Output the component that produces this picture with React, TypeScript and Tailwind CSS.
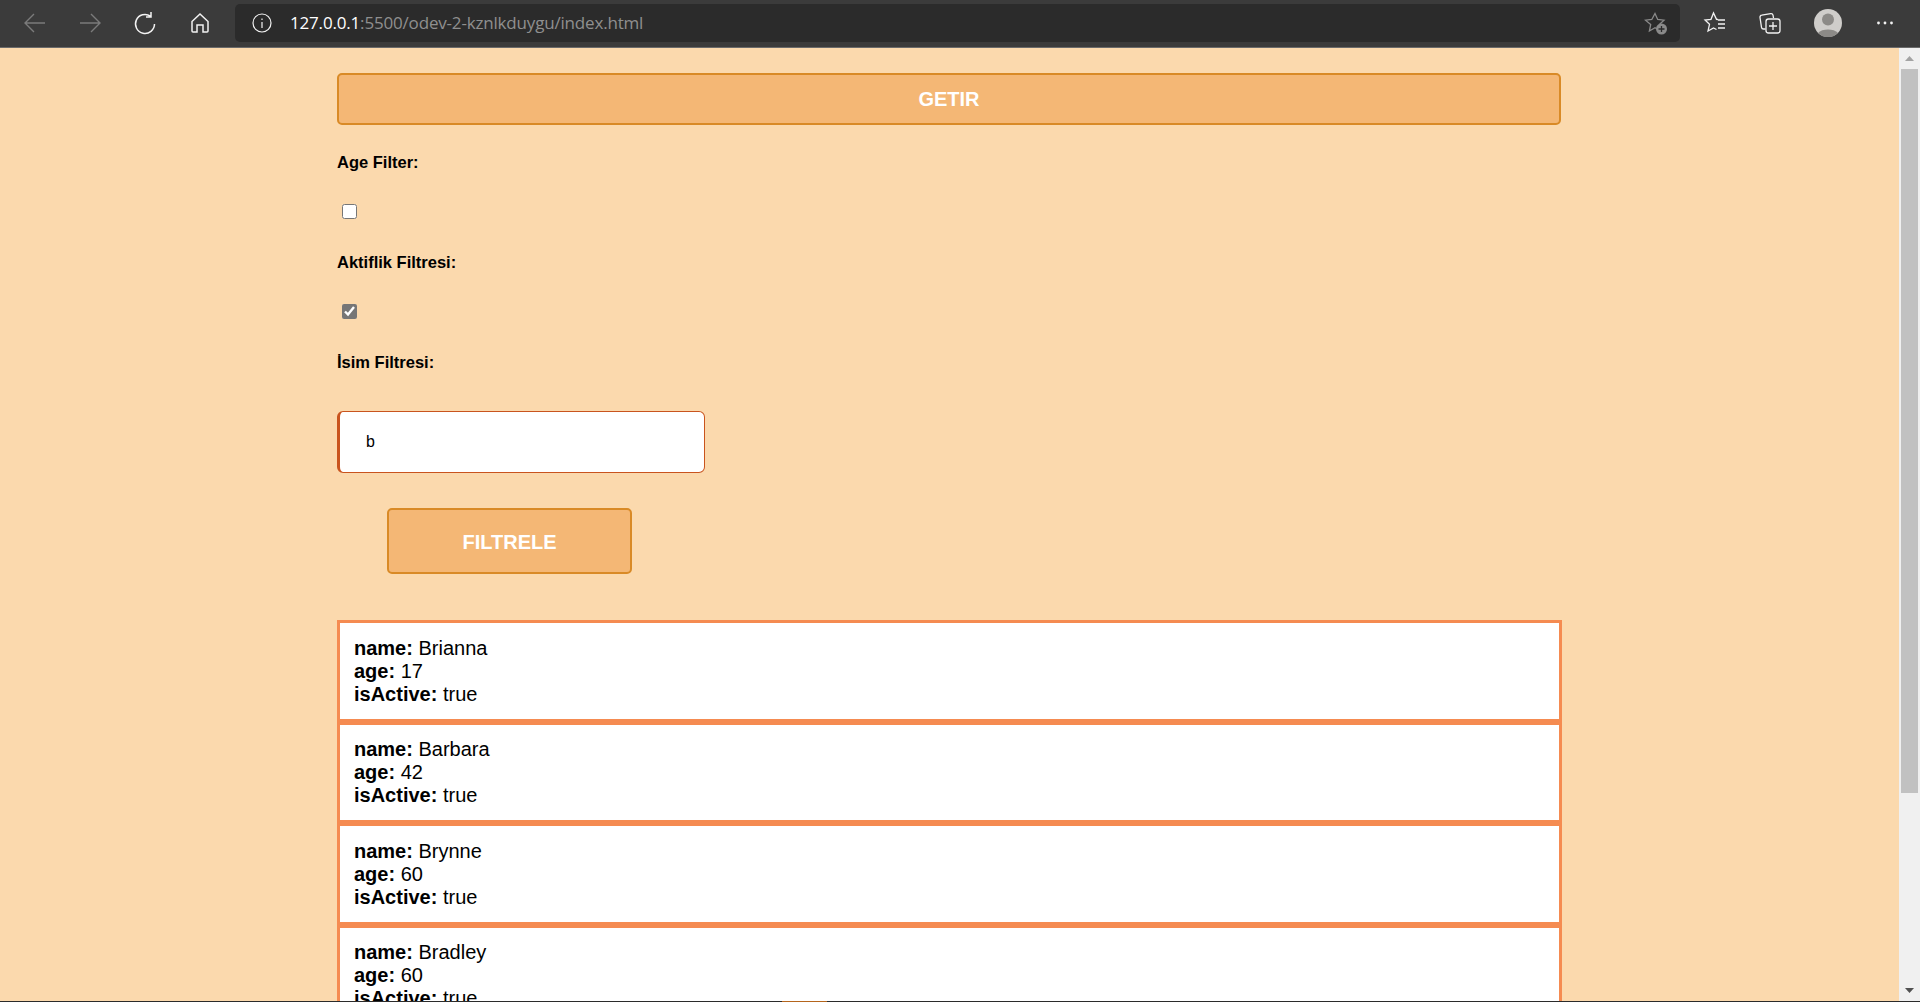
import React from "react";

const people = [
  { name: "Brianna", age: 17 },
  { name: "Barbara", age: 42 },
  { name: "Brynne", age: 60 },
  { name: "Bradley", age: 60 },
];

const labelClass = "block text-[16.5px] font-bold leading-[18px] text-black";

function Toolbar() {
  return (
    <div className="flex h-[48px] shrink-0 items-center border-b border-[#6a6a6a] bg-[#3b3b3b] pb-[1px] font-['Open_Sans',sans-serif]">
      {/* nav buttons */}
      <div className="flex w-[235px] items-center pl-[23px] gap-[31px]">
        <svg className="h-[24px] w-[24px]" viewBox="0 0 24 24" fill="none" stroke="#7b7b7b" strokeWidth={1.4}>
          <path d="M22 12H2.5M11 3l-9 9 9 9" />
        </svg>
        <svg className="h-[24px] w-[24px]" viewBox="0 0 24 24" fill="none" stroke="#7b7b7b" strokeWidth={1.4}>
          <path d="M2 12h19.5M13 3l9 9-9 9" />
        </svg>
        <svg className="h-[24px] w-[24px]" viewBox="0 0 24 24" fill="none" stroke="#f2f2f2" strokeWidth={1.5}>
          <path d="M17.5 5.2A9.5 9.5 0 1 0 21.5 13M18 1v5h-5" />
        </svg>
        <svg className="h-[24px] w-[24px]" viewBox="0 0 24 24" fill="none" stroke="#f2f2f2" strokeWidth={1.5}>
          <path d="M4 10.5 12 3l8 7.500V20a1 1 0 0 1-1 1h-4v-7H9v7H5a1 1 0 0 1-1-1z" />
        </svg>
      </div>
      {/* address bar */}
      <div className="flex h-[38px] w-[1445px] items-center rounded-[5px] bg-[#2b2b2b] pl-[17px] pr-[12px]">
        <svg className="h-[20px] w-[20px] shrink-0" viewBox="0 0 20 20" fill="none" stroke="#f2f2f2" strokeWidth={1.2}>
          <circle cx="10" cy="10" r="9" />
          <path d="M10 9v6M10 5.500v1.500" />
        </svg>
        <div className="ml-[18px] text-[17px] tracking-[-0.18px] whitespace-nowrap text-[#8f8f8f]">
          <span className="text-white">127.0.0.1</span>:5500/odev-2-kznlkduygu/index.html
        </div>
        <div className="flex-1" />
        <svg className="h-[24px] w-[24px]" viewBox="0 0 24 24" fill="none">
          <path d="M11 2.500l2.700 6 6.300.700-4.700 4.300 1.300 6.500-5.600-3.300-5.600 3.300 1.300-6.500L1.500 9.200l6.300-.7z" stroke="#8a8a8a" strokeWidth={1.3} />
          <circle cx="17.500" cy="18" r="5.500" fill="#8a8a8a" />
          <path d="M17.500 15v6M14.500 18h6" stroke="#2b2b2b" strokeWidth={1.3} />
        </svg>
      </div>
      {/* right side */}
      <div className="flex flex-1 items-center pl-[23px]">
        <svg className="h-[24px] w-[24px]" viewBox="0 0 24 24" fill="none" stroke="#f2f2f2" strokeWidth={1.3}>
          <path d="M15 8.500l-1.500-.2L10.500 2 8 8.300 2 9l4.500 4.300L5 20l5.500-3 3 1.500" />
          <path d="M15 9h7M15 13h7M15 17h7" />
        </svg>
        <svg className="ml-[31px] h-[24px] w-[24px]" viewBox="0 0 24 24" fill="none" stroke="#f2f2f2" strokeWidth={1.3}>
          <path d="M7.500 18H5.500a2 2 0 0 1-2-1.700L2 6.500a2 2 0 0 1 1.700-2.300l9-1.500a2 2 0 0 1 2.300 1.500L15.500 7" />
          <rect x="8" y="8" width="14" height="14" rx="2.500" />
          <path d="M15 11v8M11 15h8" />
        </svg>
        <svg className="ml-[32px] h-[28px] w-[28px]" viewBox="0 0 28 28">
          <circle cx="14" cy="14" r="14" fill="#cfcdca" />
          <circle cx="14" cy="10.500" r="6" fill="#8c8a87" />
          <path d="M4 24a12 8 0 0 1 20 0 14 14 0 0 1-20 0z" fill="#8c8a87" />
        </svg>
        <svg className="ml-[35px] h-[16px] w-[16px]" viewBox="0 0 16 16" fill="#f2f2f2">
          <circle cx="1.500" cy="8" r="1.400" />
          <circle cx="8" cy="8" r="1.400" />
          <circle cx="14.500" cy="8" r="1.400" />
        </svg>
      </div>
    </div>
  );
}

function Scrollbar() {
  return (
    <div className="flex w-[21px] shrink-0 flex-col items-center bg-[#f0f0f0]">
      <svg className="mt-[8px] h-[5px] w-[9px]" viewBox="0 0 9 5" fill="#a3a3a3">
        <path d="M4.500 0 9 5H0z" />
      </svg>
      <div className="mt-[8px] h-[724px] w-[17px] bg-[#c1c1c1]" />
      <div className="flex-1" />
      <svg className="mb-[8px] h-[5px] w-[9px]" viewBox="0 0 9 5" fill="#505050">
        <path d="M0 0h9L4.500 5z" />
      </svg>
    </div>
  );
}

export default function App() {
  return (
    <div className="flex h-screen flex-col overflow-hidden bg-[#fbd9ad] font-['Liberation_Sans',Arial,sans-serif]">
      <Toolbar />
      <div className="flex min-h-0 flex-1">
        <div className="min-w-0 flex-1 overflow-hidden">
          <div className="mx-auto w-[1225px] pt-[25px]">
            <button className="block h-[52px] w-[1224px] rounded-[5px] border-2 border-[#d98a26] bg-[#f4b775] text-[20px] font-bold text-white">
              GETIR
            </button>

            <label className={`${labelClass} mt-[28px]`}>Age Filter:</label>
            <div className="mt-[33px] h-[15px] pl-[5px] leading-none">
              <input type="checkbox" className="m-0 block h-[15px] w-[15px]" />
            </div>

            <label className={`${labelClass} mt-[34px]`}>Aktiflik Filtresi:</label>
            <div className="mt-[33px] h-[15px] pl-[5px] leading-none">
              <input type="checkbox" defaultChecked className="m-0 block h-[15px] w-[15px] accent-[#767676]" />
            </div>

            <label className={`${labelClass} mt-[34px]`}>İsim Filtresi:</label>

            <input
              type="text"
              defaultValue="b"
              className="mt-[40px] block h-[62px] w-[368px] rounded-[6px] border border-l-[3px] border-[#c9541e] bg-white pl-[26px] text-base text-black outline-none"
            />

            <button className="mt-[35px] ml-[50px] block h-[66px] w-[245px] rounded-[5px] border-2 border-[#d98a26] bg-[#f4b775] pt-[1px] text-[20px] font-bold text-white">
              FILTRELE
            </button>

            <div className="mt-[46px]">
              {people.map((p) => (
                <div key={p.name} className="border-[3px] border-[#f58b51] bg-white px-[14px] pt-[13.6px] pb-[13px] text-[20px] leading-[23px] text-black">
                  <div>
                    <b>name:</b> {p.name}
                  </div>
                  <div>
                    <b>age:</b> {p.age}
                  </div>
                  <div>
                    <b>isActive:</b> true
                  </div>
                </div>
              ))}
            </div>
          </div>
        </div>
        <Scrollbar />
      </div>
      {/* bottom edge of the window */}
      <div className="flex h-px shrink-0 bg-[#2b2b2b]">
        <div className="ml-[782px] w-[45px] bg-[#b5651d]" />
      </div>
    </div>
  );
}
